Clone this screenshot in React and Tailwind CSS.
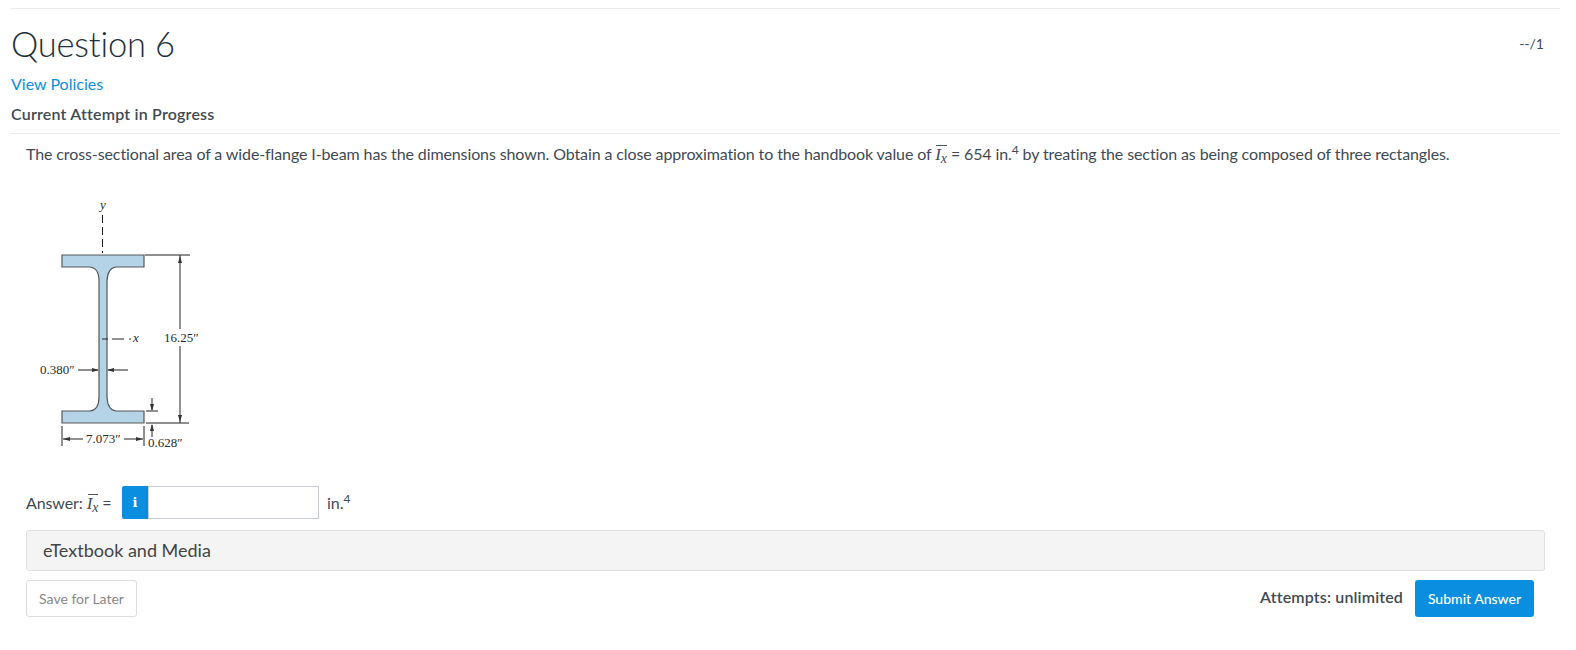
import React from 'react';

const lato = "font-['Lato','Liberation_Sans',sans-serif] [font-variant-ligatures:none]";

// I with overbar and x subscript, used in the question text and the answer label
const IxBar = () => (
  <span className="inline-block relative font-['Liberation_Serif',serif] italic leading-none text-[17px]">
    <span className="absolute left-[1px] right-0 -top-[1px] border-t-[1.5px] border-[#4a5560]"></span>
    <span>I</span>
    <span className="text-[14px] align-[-3px]">x</span>
  </span>
);

const BeamFigure = () => (
  <svg width="180" height="270" viewBox="20 190 180 270" className="block" fontFamily="'Liberation Serif', serif" fontSize="13" fill="#2b2b2b">
    {/* section outline */}
    <path
      d="M62 254 H144 V266 H116 Q107.500 267 107 280 V396 Q107.500 409 116 410 H144 V422 H62 V410 H90 Q99 409 99 396 V280 Q99 267 90 266 H62 Z"
      fill="#b5d3e6"
      stroke="#55595c"
      strokeWidth="1.200"
    />
    {/* y axis */}
    <path d="M102.500 214 V252" stroke="#222" strokeWidth="1" strokeDasharray="8 4" />
    <text x="100" y="208" fontStyle="italic">y</text>
    {/* x axis */}
    <path d="M102 338 H108 M112 338 H124 M129 338 H131" stroke="#222" strokeWidth="1" />
    <text x="133" y="341" fontStyle="italic">x</text>
    {/* overall depth */}
    <path d="M145 254 H190 M180 254 V328 M180 345 V422 M146 422 H189" stroke="#222" strokeWidth="1" fill="none" />
    <path d="M180 255 L178 262 L182 262 Z M180 421 L178 414 L182 414 Z" fill="#333" />
    <text x="164" y="341">16.25″</text>
    {/* web thickness */}
    <text x="40" y="373">0.380″</text>
    <path d="M78 369 H98 M108 369 H128" stroke="#222" strokeWidth="1" />
    <path d="M99 369 L92 367 L92 371 Z M107 369 L114 367 L114 371 Z" fill="#333" />
    {/* flange width */}
    <path d="M62 425 V445 M144 425 V445 M63 438 H83 M124 438 H143" stroke="#222" strokeWidth="1" />
    <path d="M63 438 L70 436 L70 440 Z M143 438 L136 436 L136 440 Z" fill="#333" />
    <text x="86" y="442">7.073″</text>
    {/* flange thickness */}
    <path d="M146 410 H158 M152 397 V409 M152 424 V436" stroke="#222" strokeWidth="1" />
    <path d="M152 410 L150 403 L154 403 Z M152 423 L150 430 L154 430 Z" fill="#333" />
    <text x="148" y="446">0.628″</text>
  </svg>
);

export default function App() {
  return (
    <div className={`${lato} w-[1576px] h-[650px] bg-white text-[#3f4a54] pl-[11px] pr-4 pt-2 overflow-hidden`}>
      <div className="border-t border-[#ebebeb] flex justify-between items-start pt-[11px]">
        <h1 className="text-[34.500px] leading-[48px] font-light text-[#22303d] tracking-[-0.2px]">Question 6</h1>
        <span className="text-[14px] mt-[13px] mr-[16px]">--/1</span>
      </div>
      <a className="block mt-[4px] text-[16px] leading-[24px] text-[#0a8fe0]">View Policies</a>
      <div className="mt-[6px] text-[16px] leading-[24px] font-semibold text-[#3f4a54] pb-[7px] border-b border-[#ebebeb] tracking-[0.2px]">Current Attempt in Progress</div>

      <div className="pl-[15px] pr-[15px]">
        <p className="mt-[8px] text-[16px] leading-[24px] whitespace-nowrap tracking-[-0.11px]">
          The cross-sectional area of a wide-flange I-beam has the dimensions shown. Obtain a close approximation to the handbook value of <IxBar /> = 654 in.<sup className="text-[12px]">4</sup> by treating the section as being composed of three rectangles.
        </p>

        <div className="mt-[25px] -ml-[6px]">
          <BeamFigure />
        </div>

        <div className="mt-[25px] flex items-center h-[33px]">
          <span className="text-[16px] w-[96px] whitespace-nowrap tracking-[-0.1px]">Answer: <IxBar /> =</span>
          <button className="w-[26px] h-[33px] bg-[#0a8fe0] rounded-l-[2px] text-white text-[13px] font-bold font-['DejaVu_Serif',serif]">i</button>
          <input className="w-[171px] h-[33px] border border-[#c8ccd0] outline-none" />
          <span className="ml-[8px] text-[16px]">in.<sup className="text-[12px]">4</sup></span>
        </div>

        <div className="mt-[11px] h-[41px] flex items-center pl-[16px] bg-[#f4f4f4] border border-[#e0e0e0] rounded-[3px] text-[18px] text-[#444]">eTextbook and Media</div>

        <div className="mt-[9px] flex items-center justify-between pr-[11px]">
          <button className="w-[111px] h-[37px] border border-[#dddddd] rounded-[3px] text-[14px] text-[#888]">Save for Later</button>
          <div className="flex items-center gap-[12px]">
            <span className="text-[16px] font-semibold text-[#3f4a54] -mt-[4px] tracking-[0.15px]">Attempts: unlimited</span>
            <button className="w-[119px] h-[37px] bg-[#0a8fe0] rounded-[3px] text-white text-[14px] font-medium">Submit Answer</button>
          </div>
        </div>
      </div>
    </div>
  );
}
